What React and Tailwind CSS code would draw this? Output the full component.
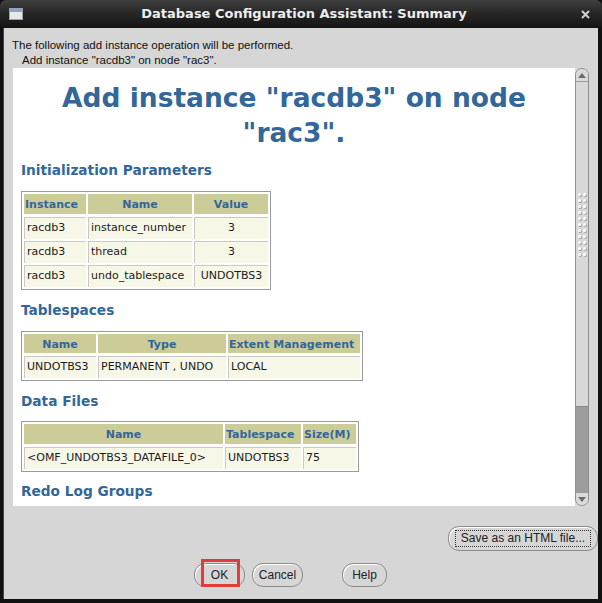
import React from 'react';

const headCls = "bg-[#cccc99] text-[#336699] font-bold px-[1px] h-[20px] pt-[3px] border-b border-b-white whitespace-nowrap";
const cellCls = "bg-[#f7f7e7] px-[2px] h-[22px] border-l border-t border-[#c9c9bd] whitespace-nowrap";

const DataTable = ({ cols, rows }) => (
  <table className="border border-[#9a9a9a] border-separate border-spacing-[2px] bg-white text-[11px] text-[#1a1a1a] font-['DejaVu_Sans',sans-serif]">
    <thead>
      <tr>
        {cols.map((c) => (
          <th key={c.label} className={headCls} style={{ width: c.w, textAlign: c.ha || 'center' }}>
            {c.label}
          </th>
        ))}
      </tr>
    </thead>
    <tbody>
      {rows.map((r, i) => (
        <tr key={i}>
          {r.map((v, j) => (
            <td key={j} className={cellCls} style={{ textAlign: cols[j].da || 'left' }}>
              {v}
            </td>
          ))}
        </tr>
      ))}
    </tbody>
  </table>
);

const SectionTitle = ({ children, className = '' }) => (
  <h2 className={"text-[13.7px] leading-[20px] font-bold text-[#336699] font-['DejaVu_Sans',sans-serif] " + className}>
    {children}
  </h2>
);

const PillButton = ({ children, className = '' }) => (
  <button className={"h-[24px] rounded-[11px] border border-[#8c8c8c] bg-[#d6d6d6] shadow-[inset_1px_1px_0_#ffffff] text-[12px] text-[#222] font-['Liberation_Sans',sans-serif] flex items-center justify-center " + className}>
    {children}
  </button>
);

const Scrollbar = () => (
  <div className="w-[14px] h-full flex flex-col bg-[#d2d2d2] border border-[#8e8e8e] rounded-[7px] overflow-hidden">
    <div className="h-[13px] border-b border-[#9a9a9a] flex items-center justify-center bg-[#dadada]">
      <svg width="8" height="5" viewBox="0 0 8 5"><path d="M0 5 L4 0 L8 5 Z" fill="#6b6b6b" /></svg>
    </div>
    <div className="h-[325px] bg-[#d8d8d8] border-b border-[#8a8a8a] flex flex-col items-center pt-[111px]">
      <div className="grid grid-cols-2 gap-x-[2px] gap-y-[3px]">
        {Array.from({ length: 22 }).map((_, i) => (
          <span key={i} className="w-[3px] h-[3px] rounded-full bg-white shadow-[1px_1px_0_#a5a5a5]" />
        ))}
      </div>
    </div>
    <div className="flex-1 bg-[#9d9d9d]" />
    <div className="h-[13px] border-t border-[#9a9a9a] flex items-center justify-center bg-[#dadada]">
      <svg width="8" height="5" viewBox="0 0 8 5"><path d="M0 0 L4 5 L8 0 Z" fill="#6b6b6b" /></svg>
    </div>
  </div>
);

export default function App() {
  return (
    <div className="w-[602px] h-[603px] bg-[#111] flex flex-col overflow-hidden">
      {/* title bar */}
      <div className="h-[28px] rounded-t-[6px] bg-gradient-to-b from-[#404040] via-[#262626] to-[#141414] flex items-center px-[9px] relative">
        <svg width="14" height="12" viewBox="0 0 14 12">
          <rect x="0.5" y="0.5" width="13" height="11" fill="#e8e8e8" stroke="#9aa4b0" />
          <rect x="1" y="1" width="12" height="3" fill="#8ea2bd" />
        </svg>
        <div className="flex-1 text-center text-[13px] font-bold text-[#ededed] font-['DejaVu_Sans',sans-serif] pl-[4px]">
          Database Configuration Assistant: Summary
        </div>
        <svg width="9" height="9" viewBox="0 0 9 9" className="mr-[3px]">
          <path d="M1 1 L8 8 M8 1 L1 8" stroke="#d0d0d0" strokeWidth="2" />
        </svg>
      </div>

      {/* body */}
      <div className="flex-1 mx-[3px] mr-[4px] mb-[4px] bg-[#d6d6d6] border-l border-[#444] flex flex-col font-['Liberation_Sans',sans-serif]">
        <div className="pt-[10px] pl-[8px] text-[11.5px] leading-[15px] text-[#111]">
          <p>The following add instance operation will be performed.</p>
          <p className="pl-[10px]">Add instance "racdb3" on node "rac3".</p>
        </div>

        <div className="h-[438px] ml-[9px] mr-[9px] flex">
          <div className="flex-1 bg-white overflow-hidden pl-[8px] pt-[12px]">
            <h1 className="text-[26.5px] leading-[35px] font-bold text-[#336699] text-center font-['DejaVu_Sans',sans-serif] pr-[8px]">
              Add instance "racdb3" on node<br />"rac3".
            </h1>

            <SectionTitle className="mt-[10px]">Initialization Parameters</SectionTitle>
            <div className="mt-[11px]">
              <DataTable
                cols={[
                  { label: 'Instance', w: 62, ha: 'left' },
                  { label: 'Name', w: 104 },
                  { label: 'Value', w: 74, da: 'center' },
                ]}
                rows={[
                  ['racdb3', 'instance_number', '3'],
                  ['racdb3', 'thread', '3'],
                  ['racdb3', 'undo_tablespace', 'UNDOTBS3'],
                ]}
              />
            </div>

            <SectionTitle className="mt-[10px]">Tablespaces</SectionTitle>
            <div className="mt-[11px]">
              <DataTable
                cols={[
                  { label: 'Name', w: 72 },
                  { label: 'Type', w: 128 },
                  { label: 'Extent Management', w: 132, ha: 'left' },
                ]}
                rows={[['UNDOTBS3', 'PERMANENT , UNDO', 'LOCAL']]}
              />
            </div>

            <SectionTitle className="mt-[10px]">Data Files</SectionTitle>
            <div className="mt-[10px]">
              <DataTable
                cols={[
                  { label: 'Name', w: 199 },
                  { label: 'Tablespace', w: 76, ha: 'left' },
                  { label: 'Size(M)', w: 53, ha: 'left' },
                ]}
                rows={[['<OMF_UNDOTBS3_DATAFILE_0>', 'UNDOTBS3', '75']]}
              />
            </div>

            <SectionTitle className="mt-[9px]">Redo Log Groups</SectionTitle>
          </div>
          <Scrollbar />
        </div>

        <div className="mt-[20px] flex justify-end">
          <PillButton className="w-[150px] h-[25px]">
            <span className="border border-dotted border-[#333] px-[5px] leading-[15px]">Save as an HTML file...</span>
          </PillButton>
        </div>

        <div className="mt-[12px] flex items-center pl-[190px]">
          <div className="relative">
            <PillButton className="w-[51px]">OK</PillButton>
            <div className="absolute left-[7px] top-[-4px] w-[39px] h-[28px] border-[3px] border-[#e53a3a]" />
          </div>
          <PillButton className="w-[51px] ml-[7px]">Cancel</PillButton>
          <PillButton className="w-[45px] ml-[39px]">Help</PillButton>
        </div>
      </div>
    </div>
  );
}
